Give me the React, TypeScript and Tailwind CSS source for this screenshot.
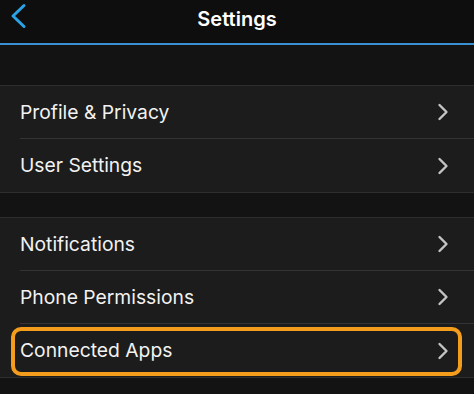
const font = { fontFamily: "Inter, 'Noto Sans', sans-serif" };

function Chevron() {
  return (
    <svg width="12" height="18" viewBox="0 0 12 18" fill="none" className="mr-[25px]">
      <path d="M2.5 2 L9.5 9 L2.5 16" stroke="#c4c4c4" strokeWidth="2.4" strokeLinecap="round" strokeLinejoin="round" />
    </svg>
  );
}

function BackChevron() {
  return (
    <svg width="20" height="28" viewBox="0 0 20 28" fill="none" className="absolute left-[8px] top-[2px]">
      <path d="M16 3.5 L5 14 L16 24.5" stroke="#2ba2e4" strokeWidth="3" strokeLinecap="round" strokeLinejoin="round" />
    </svg>
  );
}

function Row({ label, last = false, highlight = false }: { label: string; last?: boolean; highlight?: boolean }) {
  return (
    <div className="relative pl-5">
      <div className={`flex h-[53px] items-center justify-between ${last ? "" : "border-b border-[#343434]"}`}>
        <span className="text-[19.3px] text-[#f2f2f2]">{label}</span>
        <Chevron />
      </div>
      {highlight && (
        <div className="absolute left-[11px] right-[12px] top-[3px] bottom-[1px] rounded-[10px] border-[4px] border-[#f49c1c]" />
      )}
    </div>
  );
}

export default function App() {
  return (
    <div className="h-[394px] w-[474px] overflow-hidden bg-[#131313]" style={font}>
      <header className="relative flex h-[45px] items-center justify-center border-b-2 border-[#3b90d2] bg-[#0e0e0e]">
        <BackChevron />
        <h1 className="-mt-[6px] text-[20px] font-semibold text-white">Settings</h1>
      </header>

      <div className="h-[40px]" />

      <section className="border-y border-[#2e2e2e] bg-[#1c1c1c]">
        <Row label="Profile & Privacy" />
        <Row label="User Settings" last />
      </section>

      <div className="h-[24px]" />

      <section className="border-y border-[#2e2e2e] bg-[#1c1c1c]">
        <Row label="Notifications" />
        <Row label="Phone Permissions" />
        <Row label="Connected Apps" last highlight />
      </section>
    </div>
  );
}
